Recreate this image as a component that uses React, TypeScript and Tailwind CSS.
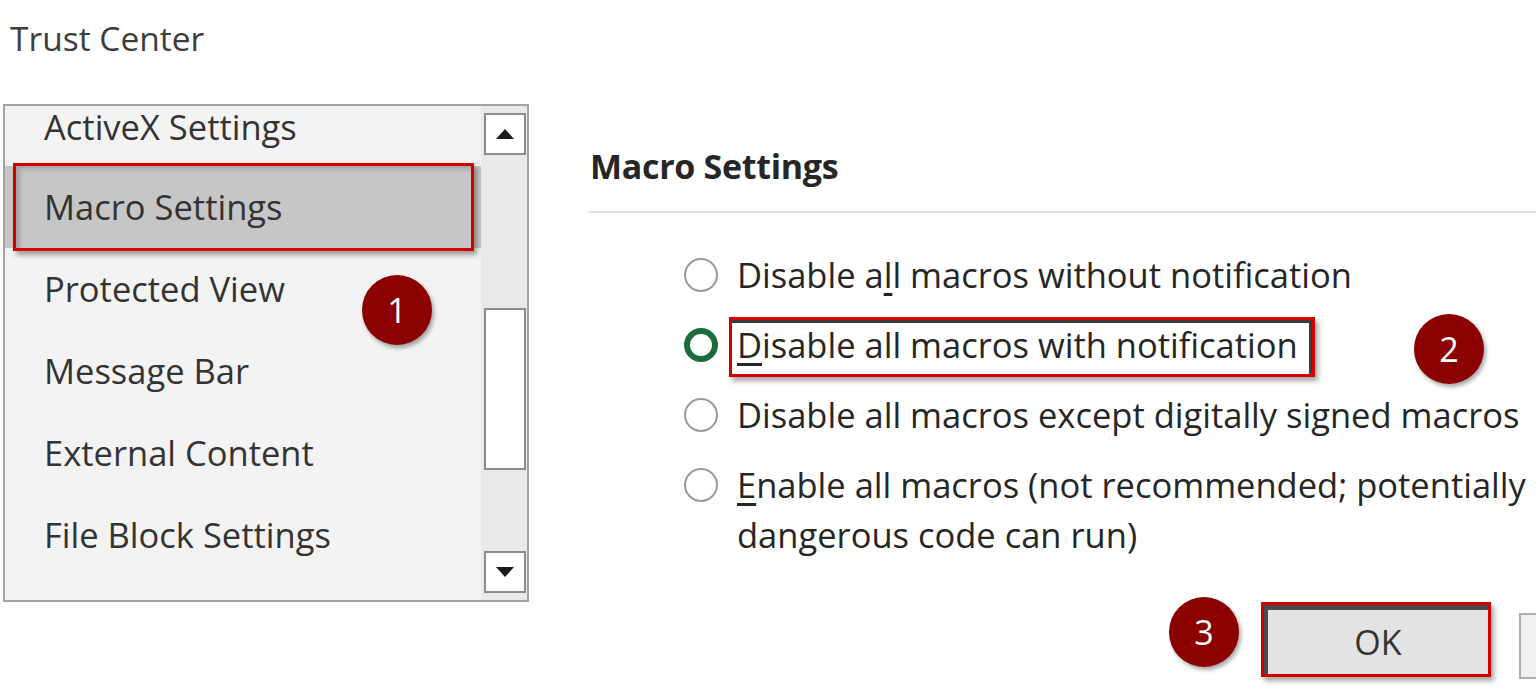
import type { ReactNode } from 'react'

const font = { fontFamily: '"Open Sans", "Noto Sans", sans-serif' }

const listItems = [
  'ActiveX Settings',
  'Macro Settings',
  'Protected View',
  'Message Bar',
  'External Content',
  'File Block Settings',
]

function Badge({ n, className }: { n: string; className: string }) {
  return (
    <div
      className={`absolute w-[70px] h-[70px] rounded-full bg-[#8b0000] text-white flex items-center justify-center text-[34px] shadow-[2px_3px_4px_rgba(0,0,0,0.35)] ${className}`}
    >
      {n}
    </div>
  )
}

function Radio({ checked }: { checked?: boolean }) {
  if (checked) {
    return (
      <span className="shrink-0 w-[34px] h-[34px] rounded-full border-[6px] border-[#1d6b3c] bg-white" />
    )
  }
  return (
    <span className="shrink-0 w-[34px] h-[34px] rounded-full border-2 border-[#9a9a9a] bg-white" />
  )
}

function Option({ checked, children }: { checked?: boolean; children: ReactNode }) {
  return (
    <div className="flex items-start gap-[19px] text-[34.5px] leading-[50px] text-[#262626] whitespace-nowrap">
      <span className="h-[50px] flex items-center">
        <Radio checked={checked} />
      </span>
      <div>{children}</div>
    </div>
  )
}

function ScrollButton({ up }: { up?: boolean }) {
  return (
    <div className="w-[42px] h-[42px] bg-white border-2 border-[#8c8c8c] flex items-center justify-center">
      <svg width="20" height="12" viewBox="0 0 20 12">
        {up ? <path d="M10 1 L19 11 L1 11 Z" fill="#1a1a1a" /> : <path d="M1 1 L19 1 L10 11 Z" fill="#1a1a1a" />}
      </svg>
    </div>
  )
}

function ListBox() {
  return (
    <div className="ml-[3px] w-[526px] h-[498px] shrink-0 border-2 border-[#a3a3a3] bg-[#f3f3f3] flex">
      <div className="flex-1 relative pt-[2px]">
        <div className="flex flex-col">
          {listItems.map((item, i) => (
            <div
              key={item}
              className={`flex pl-[39px] text-[34.5px] leading-[38px] text-[#333] ${
                i === 0 ? 'h-[58px] items-start' : 'h-[82px] items-center'
              } ${i === 1 ? 'bg-[#c6c6c6] relative' : ''}`}
            >
              {item}
              {i === 1 && (
                <span className="absolute left-[8px] right-[7px] top-[-3px] bottom-[-3px] border-[3px] border-[#d40000] shadow-[3px_4px_5px_rgba(0,0,0,0.35),inset_4px_3px_4px_rgba(0,0,0,0.18)]" />
              )}
            </div>
          ))}
        </div>
      </div>
      <div className="w-[46px] shrink-0 bg-[#e9e9e9] flex flex-col items-center py-[7px] pl-[2px]">
        <ScrollButton up />
        <div className="w-[42px] h-[162px] bg-white border-2 border-[#8c8c8c] mt-[153px]" />
        <div className="flex-1" />
        <ScrollButton />
      </div>
    </div>
  )
}

export default function App() {
  return (
    <div className="relative w-[1536px] h-[689px] bg-white overflow-hidden" style={font}>
      <div className="h-[104px] pl-[10px] pt-[15px] text-[33.5px] leading-[46px] text-[#3d3d3d]">Trust Center</div>

      <div className="flex">
        <ListBox />

        <div className="ml-[59px] flex-1 min-w-0 mt-[-104px] pt-[143px]">
          <div className="text-[34px] leading-[46px] font-bold text-[#262626] pl-[2px] tracking-[-0.3px]">
            Macro Settings
          </div>
          <div className="mt-[22px] h-[2px] bg-[#e3e3e3]" />

          <div className="pl-[96px] mt-[37px] flex flex-col gap-[20px]">
            <Option>
              Disable a<span className="underline underline-offset-[5px]">l</span>l macros without notification
            </Option>
            <Option checked>
              <span className="relative">
                <span className="absolute left-[-8px] right-[-17px] top-[-4px] bottom-[-9px] border-[3px] border-[#d40000] shadow-[3px_4px_5px_rgba(0,0,0,0.35),inset_-3px_3px_0_#3a3a3a]" />
                <span className="relative">
                  <span className="underline underline-offset-[5px]">D</span>isable all macros with notification
                </span>
              </span>
            </Option>
            <Option>
              Disable all macros except di<span className="underline underline-offset-[3px]">g</span>itally signed macros
            </Option>
            <Option>
              <span className="underline underline-offset-[5px]">E</span>nable all macros (not recommended; potentially
              <br />
              dangerous code can run)
            </Option>
          </div>

          <div className="flex items-start pl-[673px] mt-[42px]">
            <div className="w-[230px] h-[75px] border-[3px] border-[#d40000] shadow-[3px_4px_5px_rgba(0,0,0,0.35)] shrink-0">
              <div className="w-full h-full bg-[#e3e3e3] border-t-[5px] border-l-[4px] border-[#4a4a4a] flex items-center justify-center text-[34px] text-[#333]">
                OK
              </div>
            </div>
            <div className="ml-[28px] mt-[11px] w-[120px] h-[66px] shrink-0 bg-[#f0f0f0] border-2 border-[#adadad]" />
          </div>
        </div>
      </div>

      <Badge n="1" className="left-[362px] top-[275px]" />
      <Badge n="2" className="left-[1414px] top-[314px]" />
      <Badge n="3" className="left-[1169px] top-[597px]" />
    </div>
  )
}
